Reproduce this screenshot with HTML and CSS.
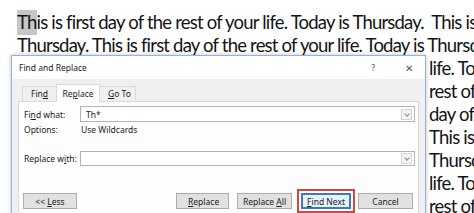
FILE: index.html
```html
<!DOCTYPE html>
<html lang="en">
<head>
  <meta charset="UTF-8" />
  <title>Find and Replace</title>
  <link rel="stylesheet" href="styles.css">
</head>
<body>
  <div class="doc">
    <div class="line"><span class="hit">Th</span>is is first day of the rest of your life. Today is Thursday.&nbsp; This is first</div>
    <div class="line">Thursday. This is first day of the rest of your life. Today is Thursday.</div>
    <div class="tail">
      <div class="line">life. Today</div>
      <div class="line">rest of</div>
      <div class="line">day of</div>
      <div class="line">This is first</div>
      <div class="line">Thursday.</div>
      <div class="line">life. Today</div>
      <div class="line">rest of,</div>
    </div>
  </div>

  <div class="dialog">
    <div class="titlebar">
      <span class="title">Find and Replace</span>
      <span class="tb-btn help">?</span>
      <span class="tb-btn close">&#x2715;</span>
    </div>
    <div class="dlg-body">
      <div class="tabs">
        <div class="tab">Fin<u>d</u></div>
        <div class="tab active">Re<u>p</u>lace</div>
        <div class="tab"><u>G</u>o To</div>
      </div>
      <div class="panel">
        <div class="row">
          <label>Fi<u>n</u>d what:</label>
          <div class="combo"><span class="val">Th*</span><span class="arrow"></span></div>
        </div>
        <div class="row opts">
          <label>Options:</label>
          <span class="val">Use Wildcards</span>
        </div>
        <div class="row replace">
          <label>Replace w<u>i</u>th:</label>
          <div class="combo"><span class="val"></span><span class="arrow"></span></div>
        </div>
        <div class="buttons">
          <button class="btn less">&lt;&lt; <u>L</u>ess</button>
          <div class="spacer"></div>
          <button class="btn">&nbsp;<u>R</u>eplace</button>
          <button class="btn wide">Replace <u>A</u>ll</button>
          <div class="mark"><button class="btn default"><u>F</u>ind Next</button></div>
          <button class="btn cancel">Cancel</button>
        </div>
      </div>
    </div>
  </div>
</body>
</html>
```

FILE: styles.css
```css
* {
  box-sizing: border-box;
}
body {
  margin: 0;
  width: 474px;
  height: 213px;
  overflow: hidden;
  position: relative;
  background: #fff;
  font-family: Lato, 'Open Sans', sans-serif;
}
.doc {
  padding: 11px 0 0 17px;
  font-size: 18.5px;
  letter-spacing: -0.8px;
  line-height: 23px;
  color: #141414;
  white-space: nowrap;
}
.hit {
  background: #c6c6c6;
  padding: 1px 0 2px;
}
.tail {
  padding-left: 412px;
}

/* dialog sits over the document */
.dialog {
  position: absolute;
  left: 11px;
  top: 55px;
  width: 415px;
  height: 200px;
  background: #f0f0f0;
  border: 1px solid #94b3d9;
  box-shadow: 0 0 4px rgba(0, 0, 0, 0.25);
  font-family: 'Noto Sans', 'Open Sans', sans-serif;
  font-size: 8.5px;
  color: #1a1a1a;
  white-space: nowrap;
}
.titlebar {
  height: 23px;
  background: #fff;
  display: flex;
  align-items: center;
  padding: 0 0 0 7px;
  font-size: 8.5px;
}
.title {
  flex: 1;
}
.tb-btn {
  text-align: center;
  color: #444;
}
.help {
  font-size: 8px;
  margin-right: 30px;
}
.close {
  font-size: 10px;
  color: #555;
  margin-right: 12px;
}
.dlg-body {
  padding: 4px 6px 0 6px;
}
.tabs {
  display: flex;
  align-items: flex-end;
  height: 18px;
  padding-left: 4px;
}
.tab {
  height: 15px;
  padding: 0 8px;
  border: 1px solid #d9d9d9;
  border-bottom: none;
  line-height: 14px;
  margin-right: -1px;
}
.tab:first-child {
  width: 35px;
  text-align: center;
}
.tab.active {
  height: 18px;
  width: 44px;
  text-align: center;
  background: #fff;
  line-height: 17px;
  padding: 0;
  position: relative;
  margin-bottom: -1px;
  z-index: 1;
}
.tab:last-child {
  width: 37px;
  text-align: center;
}
.panel {
  background: #fdfdfd;
  border: 1px solid #d9d9d9;
  height: 200px;
  padding: 4px 5px 0 4px;
}
.row {
  display: flex;
  align-items: center;
  height: 16px;
}
.row label {
  width: 57px;
  padding-left: 1px;
}
.combo {
  flex: 1;
  height: 16px;
  margin-right: -2px;
  border: 1px solid #b4b4b4;
  background: #fff;
  display: flex;
  align-items: center;
  padding-left: 5px;
}
.combo .val {
  flex: 1;
}
.arrow {
  width: 11px;
  height: 11px;
  margin-right: 2px;
  border: 1px solid #d4d4d4;
  background: #f4f4f4;
  position: relative;
}
.arrow::after {
  content: "";
  position: absolute;
  left: 3px;
  top: 2px;
  width: 3px;
  height: 3px;
  border-right: 1px solid #888;
  border-bottom: 1px solid #888;
  transform: rotate(45deg);
}
.opts {
  height: 15px;
}
.opts .val {
  padding-left: 1px;
}
.replace {
  margin-top: 14px;
  height: 15px;
}
.replace .combo {
  height: 15px;
}
.buttons {
  display: flex;
  align-items: center;
  margin-top: 27px;
}
.spacer {
  flex: 1;
}
.btn {
  font-family: inherit;
  font-size: 8.5px;
  color: #1a1a1a;
  height: 16px;
  width: 53px;
  padding: 0;
  background: #e1e1e1;
  border: 1px solid #adadad;
  margin-left: 8px;
}
.btn.less {
  margin-left: 0;
  width: 54px;
}
.btn.wide {
  width: 55px;
}
.mark {
  border: 2px solid #d6453b;
  padding: 2px;
  margin: -4px 0 -4px 5px;
}
.mark .btn {
  margin-left: 0;
  width: 50px;
}
.btn.default {
  background: #e5f1fb;
  border: 2px solid #3b78c6;
}
.btn.cancel {
  width: 55px;
  margin-left: 3px;
}
```
